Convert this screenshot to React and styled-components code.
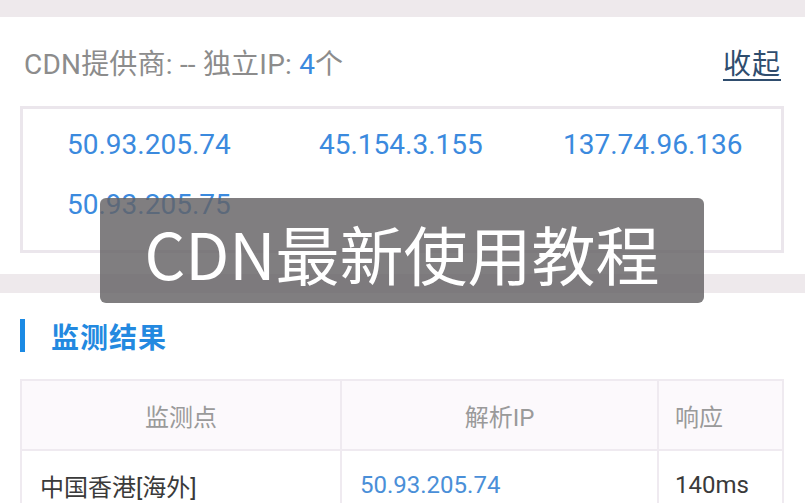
import React from "react";
import styled, { createGlobalStyle } from "styled-components";

const Global = createGlobalStyle`
  html, body { margin: 0; padding: 0; background: #ffffff; }
  body { width: 805px; height: 503px; overflow: hidden; font-family: Roboto, "Noto Sans CJK SC", sans-serif; }
`;

const Page = styled.div`
  position: relative;
  width: 805px;
  height: 503px;
  overflow: hidden;
  background: #eee9ec;
  display: flex;
  flex-direction: column;
`;

const Band = styled.div`
  height: ${p => p.$h}px;
  flex: none;
  background: #eee9ec;
`;

const Card = styled.div`
  background: #fff;
  padding: 25px 21px 21px 20px;
  display: flex;
  flex-direction: column;
  gap: 24px;
`;

const InfoRow = styled.div`
  height: 40px;
  display: flex;
  align-items: center;
  justify-content: space-between;
  padding-left: 4px;
`;

const InfoText = styled.div`
  font-family: Roboto, "Noto Sans CJK SC", sans-serif;
  font-size: 28px;
  color: #8c8c8c;
  letter-spacing: 0.2px;
`;

const Blue = styled.span`
  color: #3b8ade;
`;

const Collapse = styled.a`
  font-family: "Noto Sans CJK SC", sans-serif;
  font-size: 28px;
  color: #2f4d6e;
  text-decoration: underline;
  text-underline-offset: 5px;
  text-decoration-thickness: 2px;
  margin-right: 3px;
  letter-spacing: 1px;
`;

const IpBox = styled.div`
  border: 3px solid #ebe6ec;
  padding: 16px 0 25px 44px;
  display: grid;
  grid-template-columns: 252px 244px 1fr;
  row-gap: 20px;
`;

const Ip = styled.div`
  height: 40px;
  line-height: 40px;
  font-family: Roboto, sans-serif;
  font-size: 28px;
  color: #3b8ade;
`;

const Section = styled.div`
  flex: 1;
  background: #fff;
  padding: 26px 21px 0 20px;
  display: flex;
  flex-direction: column;
  gap: 27px;
`;

const TitleRow = styled.div`
  height: 33px;
  display: flex;
  align-items: center;
  gap: 26px;
`;

const Bar = styled.div`
  width: 5px;
  height: 33px;
  background: #1b8ae4;
`;

const Title = styled.div`
  font-family: "Noto Sans CJK SC", sans-serif;
  font-weight: 700;
  font-size: 28px;
  color: #2389e0;
  letter-spacing: 1px;
`;

const Table = styled.div`
  display: grid;
  grid-template-columns: 320px 317px 1fr;
  grid-auto-rows: 70px;
  border-top: 2px solid #efeaf0;
  border-left: 2px solid #efeaf0;
`;

const Cell = styled.div`
  display: flex;
  align-items: center;
  justify-content: ${p => (p.$center ? "center" : "flex-start")};
  padding-left: ${p => (p.$center ? 0 : p.$pad || 16)}px;
  border-right: 2px solid #efeaf0;
  border-bottom: 2px solid #efeaf0;
  background: ${p => (p.$head ? "#fcf9fc" : "#fff")};
  font-family: Roboto, "Noto Sans CJK SC", sans-serif;
  font-size: 24px;
  color: ${p => (p.$head ? "#9a9a9a" : p.$ip ? "#4a8fd8" : "#3a3a3a")};
`;

const Caption = styled.div`
  position: absolute;
  left: 100px;
  top: 198px;
  width: 604px;
  height: 105px;
  border-radius: 6px;
  background: rgba(100, 98, 100, 0.82);
  display: flex;
  align-items: center;
  justify-content: center;
  color: #fff;
  font-family: "Noto Sans CJK SC", sans-serif;
  font-size: 64px;
  line-height: 1;
  padding-top: 2px;
  box-sizing: border-box;
`;

const ips = ["50.93.205.74", "45.154.3.155", "137.74.96.136", "50.93.205.75"];

export default function App() {
  return (
    <>
      <Global />
      <Page>
        <Band $h={17} />
        <Card>
          <InfoRow>
            <InfoText>
              CDN提供商: -- 独立IP: <Blue>4</Blue>个
            </InfoText>
            <Collapse>收起</Collapse>
          </InfoRow>
          <IpBox>
            {ips.map(ip => (
              <Ip key={ip}>{ip}</Ip>
            ))}
          </IpBox>
        </Card>
        <Band $h={19} />
        <Section>
          <TitleRow>
            <Bar />
            <Title>监测结果</Title>
          </TitleRow>
          <Table>
            <Cell $head $center>监测点</Cell>
            <Cell $head $center>解析IP</Cell>
            <Cell $head>响应</Cell>
            <Cell $pad={18}>中国香港[海外]</Cell>
            <Cell $ip $pad={18}>50.93.205.74</Cell>
            <Cell>140ms</Cell>
          </Table>
        </Section>
        <Caption>CDN最新使用教程</Caption>
      </Page>
    </>
  );
}
